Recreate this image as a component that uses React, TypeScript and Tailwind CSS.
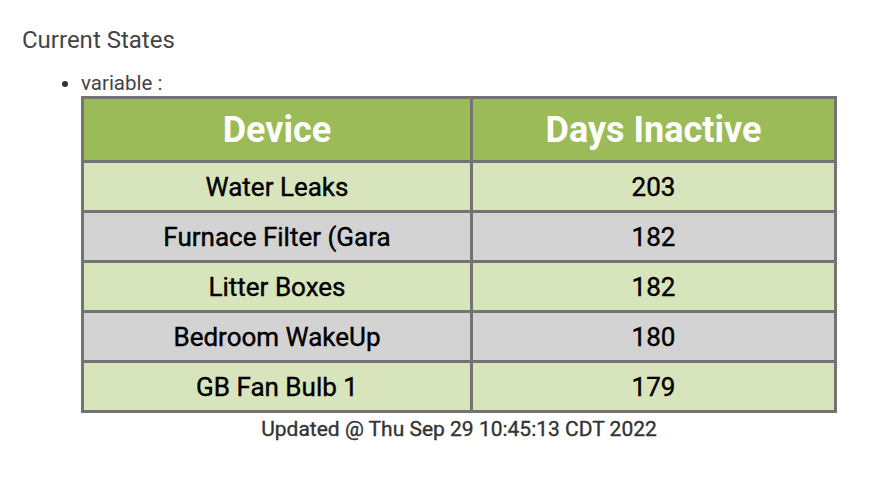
import React from "react";

const rows = [
  { name: "Water Leaks", days: 203 },
  { name: "Furnace Filter (Gara", days: 182 },
  { name: "Litter Boxes", days: 182 },
  { name: "Bedroom WakeUp", days: 180 },
  { name: "GB Fan Bulb 1", days: 179 },
];

function App() {
  return (
    <div className="min-h-screen bg-white font-['Roboto',sans-serif]">
      <div className="pl-[22px] pt-[26px]">
        <h2 className="text-[24px] leading-[28px] text-[#444]">Current States</h2>
        <ul className="mt-[17px] list-disc pl-[59px] text-[#444] marker:text-[#333]">
          <li className="text-[20.5px] leading-[24px]">
            variable :
            <table className="mt-[1px] w-[756px] border-collapse border-[3px] border-[#737373]">
              <thead>
                <tr className="bg-[#9bbb59]">
                  <th className="h-[64px] w-[389px] border-[3px] border-[#737373] text-[36px] font-bold text-white">
                    Device
                  </th>
                  <th className="h-[64px] border-[3px] border-[#737373] text-[36px] font-bold text-white">
                    Days Inactive
                  </th>
                </tr>
              </thead>
              <tbody>
                {rows.map((row, i) => (
                  <tr key={row.name} className={i % 2 === 0 ? "bg-[#d8e4bc]" : "bg-[#d3d3d3]"}>
                    <td className="h-[50px] border-[3px] border-[#737373] text-center text-[26px] text-black [-webkit-text-stroke:0.4px_black]">
                      {row.name}
                    </td>
                    <td className="h-[50px] border-[3px] border-[#737373] text-center text-[26px] text-black [-webkit-text-stroke:0.4px_black]">
                      {row.days}
                    </td>
                  </tr>
                ))}
              </tbody>
            </table>
            <div className="w-[756px] pt-[4px] text-center text-[21px] text-[#333] [-webkit-text-stroke:0.35px_#333]">
              Updated @ Thu Sep 29 10:45:13 CDT 2022
            </div>
          </li>
        </ul>
      </div>
    </div>
  );
}

export default App;
